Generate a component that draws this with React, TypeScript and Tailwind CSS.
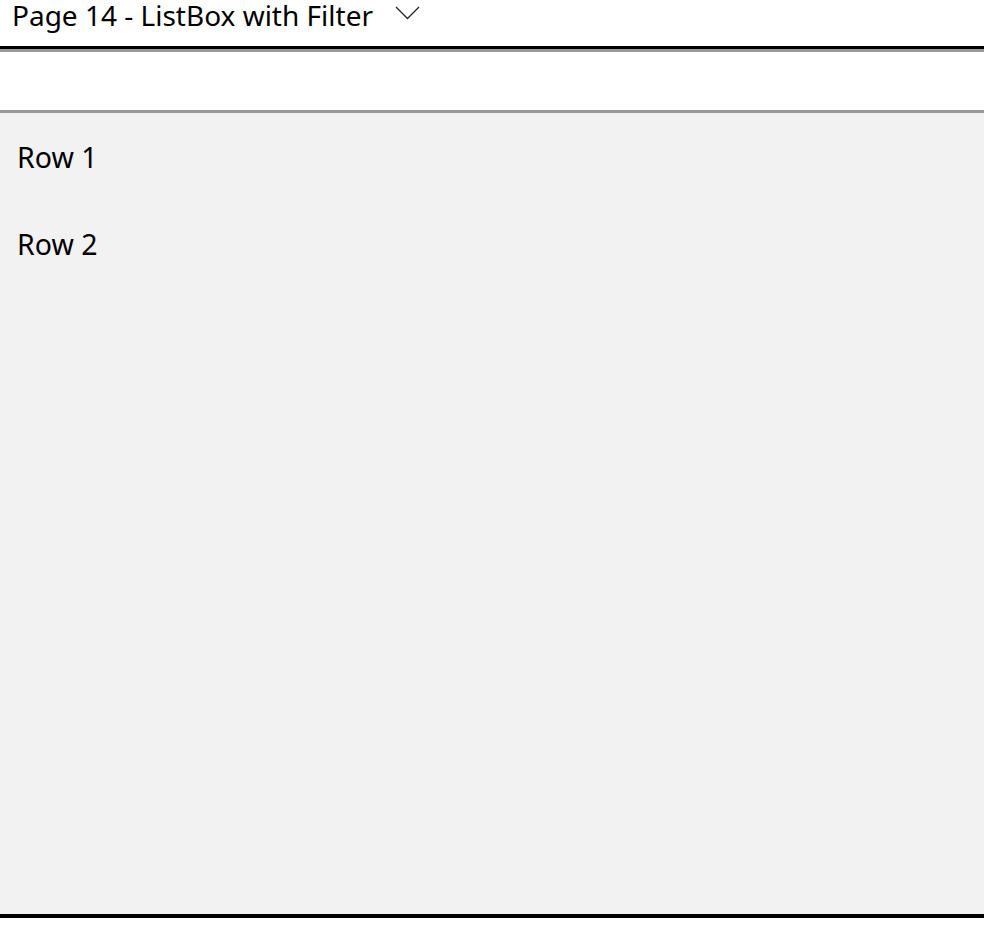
const rows = ['Row 1', 'Row 2']

export default function App() {
  return (
    <div className="flex h-[928px] w-[984px] flex-col bg-white font-['Noto_Sans',sans-serif] text-black">
      <div className="flex h-[46px] items-start pl-[12px]">
        <span className="text-[28px] leading-[30px]">Page 14 - ListBox with Filter</span>
        <svg className="ml-[22px] mt-[6px]" width="25" height="14" viewBox="0 0 25 14" fill="none">
          <path d="M1 1 L12.5 12.5 L24 1" stroke="#222" strokeWidth="1.3" />
        </svg>
      </div>
      <div className="h-[3px] bg-black" />
      <input className="h-[64px] w-full border-y-[3px] border-[#999999] bg-white px-3 outline-none" />
      <div className="flex flex-1 flex-col bg-[#f2f2f2] pt-[24px]">
        {rows.map((r) => (
          <div key={r} className="flex h-[87px] items-start pl-[17px] text-[28.5px] leading-[40px]">
            {r}
          </div>
        ))}
      </div>
      <div className="h-[4px] bg-black" />
      <div className="h-[10px] bg-white" />
    </div>
  )
}
